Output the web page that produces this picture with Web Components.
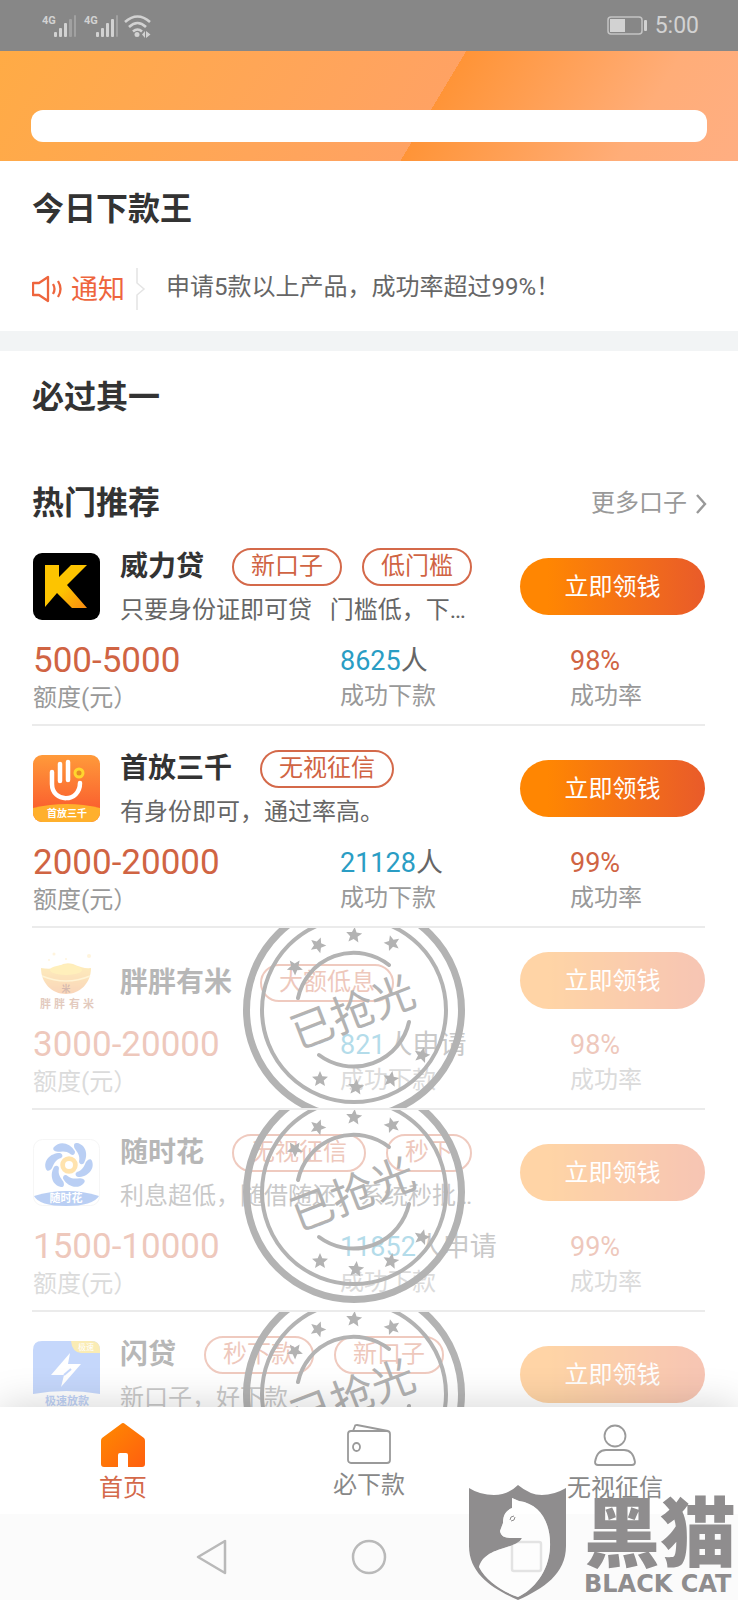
<!DOCTYPE html>
<html lang="zh-CN">
<head>
<meta charset="utf-8">
<meta name="viewport" content="width=device-width, initial-scale=1">
<title>首页</title>
<style>
  html, body { margin: 0; height: 100%; background: #fff; }
  body { font-family: Roboto, "Noto Sans CJK SC", sans-serif; font-size: 24px; color: #333; }
</style>
</head>
<body>
<loan-app>
  <status-bar slot="top"></status-bar>
  <hero-banner></hero-banner>
  <page-section>
    <section-title>今日下款王</section-title>
    <notice-line>申请5款以上产品，成功率超过99%！</notice-line>
  </page-section>
  <page-section divided>
    <section-title spaced>必过其一</section-title>
    <section-title>热门推荐<a slot="more" href="#more">更多口子</a></section-title>
    <loan-card name="威力贷" tags="新口子,低门槛" amount="500-5000" count="8625" unit="人" rate="98%">
      <logo-k slot="logo"></logo-k>只要身份证即可贷&nbsp;&nbsp;&nbsp;门槛低，下…
    </loan-card>
    <loan-card name="首放三千" tags="无视征信" amount="2000-20000" count="21128" unit="人" rate="99%">
      <logo-hand slot="logo"></logo-hand>有身份即可，通过率高。
    </loan-card>
    <loan-card sold compact name="胖胖有米" tags="大额低息" amount="3000-20000" count="821" unit="人申请" rate="98%">
      <logo-rice slot="logo"></logo-rice>
    </loan-card>
    <loan-card sold name="随时花" tags="无视征信,秒下" amount="1500-10000" count="11852" unit="人申请" rate="99%">
      <logo-flower slot="logo"></logo-flower>利息超低，随借随还，系统秒批…
    </loan-card>
    <loan-card sold name="闪贷" tags="秒下款,新口子">
      <logo-flash slot="logo"></logo-flash>新口子，好下款
    </loan-card>
  </page-section>
  <tab-bar slot="bottom"></tab-bar>
  <system-nav slot="bottom"></system-nav>
  <brand-mark slot="bottom"></brand-mark>
</loan-app>

<script>
const define = (tag, html, setup) => customElements.define(tag, class extends HTMLElement {
  constructor() {
    super();
    const t = document.createElement('template');
    t.innerHTML = html;
    this.attachShadow({ mode: 'open' }).append(t.content.cloneNode(true));
  }
  connectedCallback() {
    if (setup && !this.ready) { this.ready = true; setup(this, this.shadowRoot); }
  }
});

define('loan-app', `
  <style>
    :host { display: flex; flex-direction: column; height: 100vh; position: relative; overflow: hidden; }
    main { flex: 1; min-height: 0; overflow: hidden; }
  </style>
  <slot name="top"></slot><main><slot></slot></main><slot name="bottom"></slot>`);

define('status-bar', `
  <style>
    :host { display: flex; align-items: center; justify-content: space-between; height: 51px; padding: 0 39px 0 42px; background: #878787; color: #d2d2d2; font-size: 23px; }
    div { display: flex; align-items: center; gap: 8px; }
    svg { display: block; }
  </style>
  <div>
    <svg width="112" height="28" viewBox="0 0 112 28" fill="#d2d2d2">
      <text x="0" y="12" font-family="Roboto" font-weight="700" font-size="11">4G</text>
      <rect x="12" y="20" width="3" height="5" rx="1"/><rect x="17" y="16" width="3" height="9" rx="1"/><rect x="22" y="11" width="3" height="14" rx="1"/>
      <rect x="27" y="7" width="3" height="18" rx="1" opacity=".35"/><rect x="32" y="3" width="2" height="22" rx="1" opacity=".35"/>
      <g transform="translate(42 0)"><text x="0" y="12" font-family="Roboto" font-weight="700" font-size="11">4G</text>
      <rect x="12" y="20" width="3" height="5" rx="1"/><rect x="17" y="16" width="3" height="9" rx="1"/><rect x="22" y="11" width="3" height="14" rx="1"/><rect x="27" y="7" width="3" height="18" rx="1"/><rect x="32" y="3" width="2" height="22" rx="1" opacity=".35"/></g>
      <g fill="none" stroke="#d2d2d2" stroke-width="2.6"><path d="M83 10Q95.500-1 108 10M87 15Q95.500 7 104 15M91 19.500Q95.500 15.500 100 19.500"/></g>
      <circle cx="95" cy="22.500" r="2.500"/><path d="M100 22.500l3-3.500v7zM104 19l4.500 3.500-4.500 3.500z"/>
    </svg>
  </div>
  <div>
    <svg width="40" height="20" viewBox="0 0 40 20"><rect x="1" y="1" width="34" height="17" rx="3" fill="none" stroke="#c4c4c4" stroke-width="1.500"/><rect x="3" y="3" width="15" height="13" fill="#d2d2d2"/><rect x="37" y="4" width="3" height="11" rx="1" fill="#d2d2d2"/></svg>
    <span>5:00</span>
  </div>`);

define('hero-banner', `
  <style>
    :host { display: flex; flex-direction: column; justify-content: flex-end; height: 110px; padding: 0 31px; box-sizing: border-box;
      background: linear-gradient(121deg, #ffab45 0%, #ffa263 58%, #ff9437 58%, #ffad78 85%, #ffae82 100%); }
    input { display: block; width: 100%; height: 32px; margin: 0 0 19px; padding: 0 16px; box-sizing: border-box; border: 0; border-radius: 12px; background: #fff; font: inherit; }
  </style>
  <input type="search" aria-label="搜索">`);

define('page-section', `
  <style>
    :host { display: block; padding: 27px 32px 14px; }
    :host([divided]) { border-top: 20px solid #f2f4f5; padding-top: 25px; padding-bottom: 0; }
  </style><slot></slot>`);

define('section-title', `
  <style>
    :host { display: flex; align-items: center; justify-content: space-between; height: 42px; }
    :host([spaced]) { margin-bottom: 64px; }
    h2 { margin: 0; font-size: 32px; line-height: 42px; font-weight: 700; color: #333; }
    span { display: flex; align-items: center; }
    ::slotted(a) { color: #999; text-decoration: none; font-size: 24px; line-height: 32px; }
    svg { display: none; margin: 2px -2px 0 7px; }
    :host([more]) svg { display: block; }
  </style>
  <h2><slot></slot></h2>
  <span><slot name="more"></slot><svg width="14" height="22" viewBox="0 0 14 22" fill="none" stroke="#999" stroke-width="2.400"><path d="M3 2l8 9-8 9"/></svg></span>`,
  el => { if (el.querySelector('a')) el.setAttribute('more', ''); });

define('notice-line', `
  <style>
    :host { display: flex; align-items: center; height: 56px; margin-top: 31px; color: #666; }
    b { font-weight: 400; font-size: 27px; line-height: 32px; color: #ee653d; margin: 0 11px 0 7px; padding-top: 2px; }
    svg { display: block; flex: none; }
    p { margin: 0 0 0 20px; line-height: 32px; padding-bottom: 4px; white-space: nowrap; }
  </style>
  <svg width="32" height="28" viewBox="0 0 32 28" fill="none" stroke="#ee653d" stroke-width="2.300" stroke-linejoin="round"><path d="M1 8h6L16 2v24L7 20H1zM21 9q3 5 0 10M26 6q5 8 0 16"/></svg>
  <b>通知</b>
  <svg width="10" height="42" viewBox="0 0 10 42" fill="none" stroke="#e4e4e4" stroke-width="1.500"><path d="M1 0v15l7 6-7 6v15"/></svg>
  <p><slot></slot></p>`);

const star = (x, y, a) => `<path transform="translate(${x} ${y}) rotate(${a})" d="M0-8L2.300-2.800 8-2.300 3.700 1.500 5 7 0 4-5 7-3.700 1.500-8-2.300-2.300-2.800z"/>`;
define('sold-stamp', `
  <style>:host { display: block; } svg { display: block; width: 222px; height: 222px; overflow: visible; }</style>
  <svg viewBox="-111 -111 222 222" fill="#b3b3b3">
    <g fill="none" stroke="#b3b3b3"><circle r="107.500" stroke-width="7"/><circle r="92" stroke-width="4"/>
    <path stroke-width="4" stroke-linecap="round" d="M-56-12A57 57 0 0 1 35-45M55 12A57 57 0 0 1-35 45"/></g>
    ${star(0, -75, 5)}${star(-36, -65, 20)}${star(38, -67, -15)}${star(-59, -43, 35)}${star(68, 45, 15)}${star(-34, 69, 0)}${star(2, 77, 5)}${star(37, 69, 10)}
    <text transform="rotate(-21)" x="-2" y="17" text-anchor="middle" font-family="Noto Sans CJK SC" font-weight="400" font-size="43">已抢光</text>
  </svg>`);

define('tag-pill', `
  <style>:host { display: block; box-sizing: border-box; height: 38px; padding: 0 17px; border: 2px solid #d4694a; border-radius: 19px; color: #d06443; font-size: 24px; line-height: 33px; white-space: nowrap; }</style><slot></slot>`);

define('loan-card', `
  <style>
    :host { display: block; position: relative; overflow: hidden; margin-right: 1px; border-bottom: 2px solid #ebebeb; }
    .body { padding: 14px 0 10px 1px; }
    :host([sold]) .body { opacity: .35; }
    .head { display: grid; grid-template-columns: 67px 1fr 185px; column-gap: 20px; align-items: center; height: 97px; }
    :host([compact]) .head { height: 77px; }
    .info { min-width: 0; padding-top: 4px; }
    .top { display: flex; align-items: center; gap: 20px; }
    h3 { margin: 0 8px 0 0; font-size: 28px; line-height: 38px; font-weight: 700; color: #333; white-space: nowrap; }
    p { margin: 5px 0 0; font-size: 24px; line-height: 38px; color: #666; white-space: nowrap; }
    :host([compact]) p { display: none; }
    button { height: 57px; padding: 0; border: 0; border-radius: 29px; background: linear-gradient(90deg, #ff8602 15%, #e95b2a); color: #fff; font: inherit; font-size: 24px; line-height: 54px; }
    dl { display: grid; grid-template-columns: 307fr 230fr 135fr; height: 74px; margin: 5px 0 0; }
    dl > div { display: flex; flex-direction: column; }
    dt { order: 2; color: #999; line-height: 34px; }
    dd { margin: 0; padding-top: 3px; font-size: 27px; line-height: 36px; color: #d06443; white-space: nowrap; }
    .amount dd { padding-top: 0; font-size: 35px; line-height: 41px; }
    .count dd { color: #666; }
    .count b { font-weight: 400; color: #2a9dc4; }
    sold-stamp { position: absolute; top: -29px; left: 211px; }
  </style>
  <div class="body">
    <div class="head"><slot name="logo"></slot>
      <div class="info"><div class="top"><h3></h3></div><p><slot></slot></p></div>
      <button type="button">立即领钱</button></div>
    <dl>
      <div class="amount"><dt>额度(元）</dt><dd></dd></div>
      <div class="count"><dt>成功下款</dt><dd><b></b><span></span></dd></div>
      <div class="rate"><dt>成功率</dt><dd></dd></div>
    </dl>
  </div>`,
  (el, root) => {
    const $ = q => root.querySelector(q), at = n => el.getAttribute(n);
    $('h3').textContent = at('name');
    at('tags').split(',').forEach(t => { const p = document.createElement('tag-pill'); p.textContent = t; $('.top').append(p); });
    if (at('amount')) {
      $('.amount dd').textContent = at('amount');
      $('b').textContent = at('count'); $('dd span').textContent = at('unit');
      $('.rate dd').textContent = at('rate');
    } else $('dl').remove();
    if (el.hasAttribute('sold')) root.append(document.createElement('sold-stamp'));
  });

const logo = (tag, art) => define(tag, `<style>:host { display: block; width: 67px; height: 67px; } svg { display: block; }</style><svg width="67" height="67" viewBox="0 0 67 67">${art}</svg>`);
logo('logo-k', `<defs><linearGradient id="g" x1="0" y1="0" x2="1" y2="1"><stop offset=".5" stop-color="#fdc400"/><stop offset="1" stop-color="#f88a12"/></linearGradient></defs>
  <rect width="67" height="67" rx="9" fill="#000"/><path fill="url(#g)" d="M12 12H26V24L38 12H54L34 32 54 55H39L24 40 12 54z"/>`);
logo('logo-hand', `<defs><linearGradient id="g" x1="0" y1="0" x2="0" y2="1"><stop stop-color="#ff9a3a"/><stop offset="1" stop-color="#f9522c"/></linearGradient><clipPath id="c"><rect width="67" height="67" rx="9"/></clipPath></defs>
  <g clip-path="url(#c)"><rect width="67" height="67" fill="url(#g)"/><path d="M0 53Q34 45 67 53V67H0z" fill="#ffb02c"/></g>
  <g fill="none" stroke="#fff" stroke-width="4.500" stroke-linecap="round"><path d="M19 17V29C19 48 47 48 47 28M27 9V26M35 7V25"/></g>
  <circle cx="46" cy="18" r="4" fill="#e58d24" stroke="#ffd52e" stroke-width="3"/>
  <text x="34" y="62" text-anchor="middle" font-family="Noto Sans CJK SC" font-weight="700" font-size="10" fill="#fff">首放三千</text>`);
logo('logo-rice', `<defs><linearGradient id="g" x1="0" y1="0" x2="0" y2="1"><stop stop-color="#ffd040"/><stop offset="1" stop-color="#f0893a"/></linearGradient></defs>
  <path fill="url(#g)" d="M8 21Q20 23 26 19T40 17Q50 22 58 21C58 36 47 47 33 47S8 36 8 21z"/><path d="M9 29Q33 39 57 29" fill="none" stroke="#ffe08a" stroke-width="1.500"/><ellipse cx="33" cy="23" rx="16" ry="5" fill="#ffd43f"/>
  <g fill="#ffe2a0"><circle cx="21" cy="7" r="1.500"/><circle cx="56" cy="9" r="2"/><circle cx="16" cy="13" r="1"/><circle cx="33" cy="12" r="1"/></g>
  <text x="33" y="45" text-anchor="middle" font-family="Noto Sans CJK SC" font-weight="700" font-size="9" fill="#8a3a1a">米</text>
  <g font-family="Noto Sans CJK SC" font-weight="700" font-size="11" fill="#b06a48"><text x="7" y="61">胖</text><text x="21" y="61">胖</text><text x="36" y="61">有</text><text x="50" y="61">米</text></g>`);
const petals = [0, 60, 120, 180, 240, 300].map(a => `<path transform="rotate(${a} 36 26)" d="M13 30C10 22 17 14 27 14 30 15 30 18 28 19 22 21 21 25 19 29 17 32 14 33 13 30z"/>`).join('');
logo('logo-flower', `<rect x=".5" y=".5" width="66" height="66" rx="9" fill="#fff" stroke="#e6e6e6"/>
  <g fill="#3b78e0">${petals}</g><circle cx="36" cy="26" r="9.500" fill="#ffb21a" stroke="#fff" stroke-width="1.500"/><circle cx="36" cy="26" r="4" fill="#fff"/>
  <path fill="#3b78e0" d="M1 57Q34 47 66 57 60 67 33 67T1 57z"/><text x="33" y="63" text-anchor="middle" font-family="Noto Sans CJK SC" font-weight="700" font-size="11" fill="#fff">随时花</text>`);
logo('logo-flash', `<path fill="#5b8ff5" d="M9 0H58Q67 0 67 9V53Q33 47 0 53V9Q0 0 9 0z"/><path fill="#f3c92c" d="M38 0H58Q67 0 67 9V12H48Q39 11 38 0z"/>
  <path fill="#fff" d="M37 12L18 34H31L28 46 48 23H35z"/><path d="M31 34l7-6" stroke="#5b8ff5" stroke-width="2"/>
  <text x="53" y="9" text-anchor="middle" font-family="Noto Sans CJK SC" font-size="8" fill="#fff">极速</text>
  <text x="34" y="64" text-anchor="middle" font-family="Noto Sans CJK SC" font-weight="700" font-size="11" fill="#4b7fe8">极速放款</text>`);

define('tab-bar', `
  <style>
    :host { display: block; position: relative; z-index: 1; background: #fff; box-shadow: 0 0 40px rgba(0,0,0,.18); }
    nav { display: grid; grid-template-columns: repeat(3, 1fr); height: 107px; }
    a { display: flex; flex-direction: column; align-items: center; padding-top: 16px; color: #888; text-decoration: none; font-size: 24px; line-height: 34px; }
    a.on { color: #d4694a; }
    svg { display: block; margin-bottom: 4px; }
    a.mid svg { margin-bottom: 1px; }
  </style>
  <nav>
    <a class="on" href="#home"><svg width="46" height="44" viewBox="0 0 46 44"><defs><linearGradient id="g" x1="0" y1="0" x2="1" y2="1"><stop stop-color="#ff8a00"/><stop offset="1" stop-color="#ff5f0f"/></linearGradient></defs><path fill="url(#g)" d="M21 1Q23-1 25 1L44 15Q45 16 45 18V41Q45 44 42 44H28V32Q28 30 26 30H20Q18 30 18 32V44H4Q1 44 1 41V18Q1 16 2 15z"/></svg>首页</a>
    <a class="mid" href="#loans"><svg width="46" height="44" viewBox="0 0 46 44" fill="none" stroke="#9a9a9a" stroke-width="1.800"><rect x="2" y="8" width="42" height="32" rx="3"/><path d="M7 8L9 3Q9 2 11 2L42 8"/><ellipse cx="10.500" cy="24" rx="3.500" ry="4"/></svg>必下款</a>
    <a href="#credit"><svg width="46" height="44" viewBox="0 0 46 44" fill="none" stroke="#9a9a9a" stroke-width="1.800"><circle cx="23" cy="13" r="10.500"/><path d="M14 27H32Q41 27 43 39Q43 42 40 42H6Q3 42 3 39Q5 27 14 27z"/></svg>无视征信</a>
  </nav>`);

define('system-nav', `
  <style>
    :host { display: flex; justify-content: center; align-items: center; gap: 123px; height: 86px; position: relative; z-index: 1; background: #fbfbfb; }
    button { display: block; padding: 0; border: 0; background: none; }
    svg { display: block; }
  </style>
  <button aria-label="返回"><svg width="34" height="36" viewBox="0 0 34 36" fill="none" stroke="#b9b9b9" stroke-width="2.500" stroke-linejoin="round"><path d="M31 2V34L4 18z"/></svg></button>
  <button aria-label="主屏幕"><svg width="36" height="36" viewBox="0 0 36 36" fill="none" stroke="#b9b9b9" stroke-width="2.500"><circle cx="18" cy="18" r="16"/></svg></button>
  <button aria-label="最近任务"><svg width="34" height="36" viewBox="0 0 34 36" fill="none" stroke="#b9b9b9" stroke-width="2.500"><rect x="2" y="3" width="29" height="29" rx="2"/></svg></button>`);

define('brand-mark', `
  <style>
    :host { position: absolute; z-index: 2; right: 0; bottom: 0; display: flex; gap: 17px; color: #8f8d8e; pointer-events: none; }
    svg { display: block; }
    div { display: flex; flex-direction: column; width: 154px; white-space: nowrap; }
    b { font: 900 76px/76px "Noto Sans CJK SC", sans-serif; margin-top: 6px; }
    i { font: normal 700 24px/26px "DejaVu Sans", sans-serif; margin-top: 5px; }
  </style>
  <svg width="98" height="116" viewBox="0 0 98 116">
    <path fill="#8f8d8e" fill-rule="evenodd" d="M0 4Q11 11 25 11T49 1Q61 11 73 11T97 4V62C97 90 74 105 49 116 24 105 0 90 0 62zM43 14L43 24C35 27 34 34 34 39L31 47C32 53 37 54 43 54L53 54C47 66 16 62 10 83C17 97 34 108 49 113C64 106 80 88 81 63C82 40 72 20 50 17z"/>
    <path fill="#fff" fill-opacity=".6" d="M43 14L43 24C35 27 34 34 34 39L31 47C32 53 37 54 43 54L53 54C47 66 16 62 10 83C17 97 34 108 49 113C64 106 80 88 81 63C82 40 72 20 50 17z"/>
    <path d="M41 36q0-4 4-4M42 37q4 0 4-4" fill="none" stroke="#8f8d8e"/>
  </svg>
  <div><b>黑猫</b><i>BLACK CAT</i></div>`);
</script>
</body>
</html>
